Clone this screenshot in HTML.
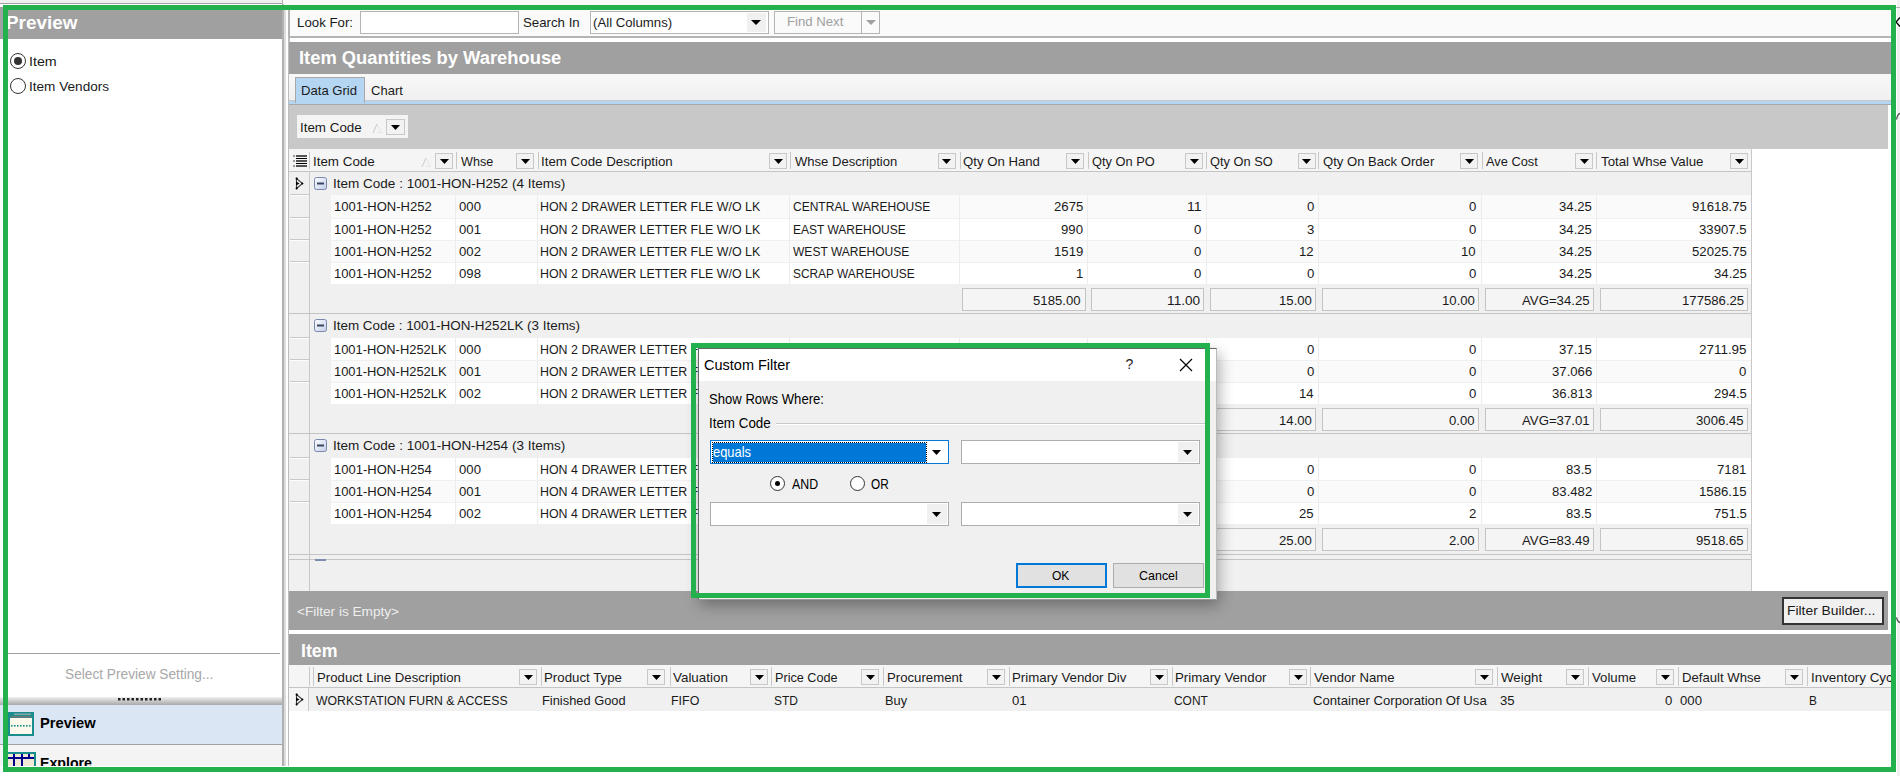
<!DOCTYPE html><html><head><meta charset="utf-8"><style>
html,body{margin:0;padding:0;width:1900px;height:776px;overflow:hidden;background:#fff}
body>div,body>svg{position:absolute}
.t{white-space:nowrap;font-family:"Liberation Sans",sans-serif;color:#1a1a1a;transform-origin:0 0}
div{font-family:"Liberation Sans",sans-serif}
</style></head><body>
<div style="left:0px;top:0px;width:283px;height:3px;background:#f0f0f0"></div>
<div style="left:0px;top:3px;width:283px;height:1px;background:#a0a0a0"></div>
<div style="left:282px;top:0px;width:2px;height:4px;background:#b0b0b0"></div>
<div style="left:283px;top:0px;width:1617px;height:10px;background:#fafafa"></div>
<div style="left:0px;top:7px;width:282px;height:32px;background:#a0a0a0"></div>
<div class="t" style="left:6.00px;top:13.77px;font-size:18px;line-height:18px;transform:scaleX(1.0478);font-weight:bold;color:#fff">Preview</div>
<div style="left:0px;top:39px;width:282px;height:658px;background:#fff"></div>
<div style="left:10px;top:53px;width:16px;height:16px;border:1px solid #333;border-radius:50%;box-sizing:border-box;background:#fff"></div>
<div style="left:14px;top:57px;width:8px;height:8px;border-radius:50%;background:#333"></div>
<div style="left:10px;top:78px;width:16px;height:16px;border:1px solid #333;border-radius:50%;box-sizing:border-box;background:#fff"></div>
<div class="t" style="left:29.00px;top:55.49px;font-size:13.6px;line-height:13.6px;transform:scaleX(1.0502);">Item</div>
<div class="t" style="left:29.00px;top:80.49px;font-size:13.6px;line-height:13.6px;">Item Vendors</div>
<div style="left:3px;top:653px;width:277px;height:1px;background:#a0a0a0"></div>
<div class="t" style="left:65.00px;top:667.16px;font-size:14px;line-height:14px;transform:scaleX(0.9779);color:#a8a8a8">Select Preview Setting...</div>
<div style="left:0px;top:697px;width:282px;height:8px;background:linear-gradient(#f0f0f0,#a8a8a8)"></div>
<svg style="left:118px;top:698px" width="45" height="3"><rect x="0.0" y="0" width="2.5" height="2.5" fill="#222"/><rect x="4.5" y="0" width="2.5" height="2.5" fill="#222"/><rect x="9.0" y="0" width="2.5" height="2.5" fill="#222"/><rect x="13.5" y="0" width="2.5" height="2.5" fill="#222"/><rect x="18.0" y="0" width="2.5" height="2.5" fill="#222"/><rect x="22.5" y="0" width="2.5" height="2.5" fill="#222"/><rect x="27.0" y="0" width="2.5" height="2.5" fill="#222"/><rect x="31.5" y="0" width="2.5" height="2.5" fill="#222"/><rect x="36.0" y="0" width="2.5" height="2.5" fill="#222"/><rect x="40.5" y="0" width="2.5" height="2.5" fill="#222"/></svg>
<div style="left:0px;top:705px;width:282px;height:39px;background:#dae6f3"></div>
<div style="left:0px;top:744px;width:282px;height:1px;background:#a0a0a0"></div>
<div style="left:0px;top:745px;width:282px;height:21px;background:#f4f4f4"></div>
<div class="t" style="left:40.30px;top:716.32px;font-size:14.4px;line-height:14.4px;transform:scaleX(1.0238);font-weight:bold;color:#000">Preview</div>
<div class="t" style="left:40.30px;top:755.82px;font-size:14.4px;line-height:14.4px;transform:scaleX(0.9849);font-weight:bold;color:#000">Explore</div>
<svg style="left:8px;top:712px" width="26" height="24"><rect x="1" y="1" width="24" height="22" fill="#fbf8ec" stroke="#1a8c8c" stroke-width="2"/><rect x="1" y="1" width="24" height="5" fill="#1a8c8c"/><rect x="6" y="1.5" width="17" height="1.5" fill="#8aa"/><rect x="3" y="4" width="20" height="1.5" fill="#777"/><rect x="3" y="13" width="1.6" height="1.6" fill="#1a8c8c"/><rect x="6" y="13" width="1.6" height="1.6" fill="#1a8c8c"/><rect x="9" y="13" width="1.6" height="1.6" fill="#1a8c8c"/><rect x="12" y="13" width="1.6" height="1.6" fill="#1a8c8c"/><rect x="15" y="13" width="1.6" height="1.6" fill="#1a8c8c"/><rect x="18" y="13" width="1.6" height="1.6" fill="#1a8c8c"/><rect x="21" y="13" width="1.6" height="1.6" fill="#1a8c8c"/></svg>
<svg style="left:8px;top:752px" width="28" height="14"><rect x="0" y="0" width="28" height="14" fill="#efe9d6"/><rect x="0" y="0" width="28" height="2" fill="#1a8c8c"/><rect x="26" y="0" width="2" height="14" fill="#1a8c8c"/><rect x="0" y="5" width="26" height="2" fill="#00008b"/><rect x="5" y="2" width="2" height="12" fill="#00008b"/><rect x="13" y="2" width="2" height="12" fill="#00008b"/><rect x="20" y="2" width="2" height="5" fill="#00008b"/></svg>
<div style="left:282px;top:4px;width:2px;height:762px;background:#b0b0b0"></div>
<div style="left:284px;top:10px;width:2px;height:756px;background:#dcdcdc"></div>
<div style="left:286px;top:10px;width:2px;height:756px;background:#fff"></div>
<div style="left:288px;top:38px;width:2px;height:728px;background:#bdbdbd"></div>
<div style="left:288px;top:10px;width:1612px;height:28px;background:#fafafa;border-left:2px solid #b4b4b4;border-bottom:2px solid #b4b4b4;box-sizing:border-box"></div>
<div class="t" style="left:297.00px;top:16.49px;font-size:13.6px;line-height:13.6px;transform:scaleX(0.9757);">Look For:</div>
<div style="left:360px;top:11px;width:159px;height:23px;background:#fff;border:1px solid #b4b4b4;box-sizing:border-box"></div>
<div class="t" style="left:523.00px;top:16.49px;font-size:13.6px;line-height:13.6px;transform:scaleX(0.9748);">Search In</div>
<div style="left:590px;top:11px;width:179px;height:23px;background:#fff;border:1px solid #b4b4b4;box-sizing:border-box"></div>
<div class="t" style="left:593.00px;top:16.49px;font-size:13.6px;line-height:13.6px;transform:scaleX(0.9709);">(All Columns)</div>
<div style="left:747px;top:13px;width:19px;height:19px;background:#f0f0f0"></div>
<div style="left:751px;top:20px;width:0;height:0;border-left:5px solid transparent;border-right:5px solid transparent;border-top:5px solid #000"></div>
<div style="left:774px;top:11px;width:106px;height:23px;background:#fafafa;border:1px solid #b4b4b4;box-sizing:border-box"></div>
<div style="left:861px;top:11px;width:1px;height:23px;background:#b4b4b4"></div>
<div class="t" style="left:787.00px;top:15.49px;font-size:13.6px;line-height:13.6px;transform:scaleX(0.9677);color:#a0a0a0">Find Next</div>
<div style="left:866px;top:20px;width:0;height:0;border-left:5px solid transparent;border-right:5px solid transparent;border-top:5px solid #a0a0a0"></div>
<div style="left:290px;top:38px;width:1606px;height:4px;background:#fff"></div>
<div style="left:289px;top:42px;width:1611px;height:32px;background:#a0a0a0"></div>
<div class="t" style="left:299.00px;top:48.77px;font-size:18px;line-height:18px;transform:scaleX(1.0191);font-weight:bold;color:#fff">Item Quantities by Warehouse</div>
<div style="left:289px;top:74px;width:1611px;height:28px;background:linear-gradient(#f8f8f8,#efefef)"></div>
<div style="left:289px;top:100px;width:1611px;height:1px;background:#c8c8c8"></div>
<div style="left:289px;top:101px;width:1611px;height:3px;background:#b5d6f2"></div>
<div style="left:289px;top:104px;width:1611px;height:1px;background:#a8a8a8"></div>
<div style="left:295px;top:77px;width:70px;height:26px;background:#b5d6f2;border:1px solid #a8a8a8;border-bottom:none;box-sizing:border-box"></div>
<div class="t" style="left:300.50px;top:83.79px;font-size:13.6px;line-height:13.6px;transform:scaleX(0.9636);">Data Grid</div>
<div class="t" style="left:370.60px;top:83.79px;font-size:13.6px;line-height:13.6px;transform:scaleX(0.9575);">Chart</div>
<div style="left:289px;top:105px;width:1600px;height:44px;background:#c8c8c8"></div>
<div style="left:297px;top:115px;width:111px;height:23px;background:#f4f4f4"></div>
<div class="t" style="left:300.00px;top:121.49px;font-size:13.6px;line-height:13.6px;transform:scaleX(0.9841);">Item Code</div>
<svg style="left:372px;top:123px" width="10" height="10"><path d="M1 10L5 1" stroke="#c8c8c8" stroke-width="1"/><path d="M5.5 2L9.5 9.5H5" fill="none" stroke="#e4e4e4" stroke-width="1"/></svg>
<div style="left:386px;top:119px;width:19px;height:16px;border:1px solid #c8c8c8;box-sizing:border-box;background:#f2f2f2"></div>
<svg style="left:391.0px;top:124.5px" width="9" height="5"><path d="M0 0H9L4.5 5Z" fill="#000"/></svg>
<div style="left:289px;top:149px;width:1462px;height:442px;background:#f0f0f0"></div>
<div style="left:1751px;top:149px;width:137px;height:442px;background:#fff"></div>
<div style="left:289px;top:149px;width:1463px;height:23px;background:#f5f5f5;border-bottom:1px solid #c4c4c4;box-sizing:border-box"></div>
<svg style="left:293px;top:155px" width="14" height="13"><g fill="#555"><rect x="3" y="0" width="11" height="2"/><rect x="3" y="5" width="11" height="2"/><rect x="3" y="10" width="11" height="2"/><rect x="0" y="0" width="2" height="2" fill="#999"/><rect x="0" y="5" width="2" height="2" fill="#999"/><rect x="0" y="10" width="2" height="2" fill="#999"/></g><g fill="#000"><rect x="3" y="3" width="11" height="1"/><rect x="3" y="8" width="11" height="1"/></g></svg>
<div style="left:309px;top:152px;width:1px;height:17px;background:#c8c8c8"></div>
<div class="t" style="left:312.70px;top:155.09px;font-size:13.6px;line-height:13.6px;transform:scaleX(0.9841);">Item Code</div>
<div style="left:435px;top:153px;width:18px;height:16px;border:1px solid #c8c8c8;box-sizing:border-box;background:#f2f2f2"></div>
<svg style="left:439.5px;top:158.5px" width="9" height="5"><path d="M0 0H9L4.5 5Z" fill="#000"/></svg>
<div style="left:456px;top:152px;width:1px;height:17px;background:#c8c8c8"></div>
<div class="t" style="left:460.50px;top:155.09px;font-size:13.6px;line-height:13.6px;transform:scaleX(0.9270);">Whse</div>
<div style="left:516px;top:153px;width:18px;height:16px;border:1px solid #c8c8c8;box-sizing:border-box;background:#f2f2f2"></div>
<svg style="left:520.5px;top:158.5px" width="9" height="5"><path d="M0 0H9L4.5 5Z" fill="#000"/></svg>
<div style="left:538px;top:152px;width:1px;height:17px;background:#c8c8c8"></div>
<div class="t" style="left:541.00px;top:155.09px;font-size:13.6px;line-height:13.6px;transform:scaleX(0.9799);">Item Code Description</div>
<div style="left:769px;top:153px;width:18px;height:16px;border:1px solid #c8c8c8;box-sizing:border-box;background:#f2f2f2"></div>
<svg style="left:773.5px;top:158.5px" width="9" height="5"><path d="M0 0H9L4.5 5Z" fill="#000"/></svg>
<div style="left:790px;top:152px;width:1px;height:17px;background:#c8c8c8"></div>
<div class="t" style="left:794.60px;top:155.09px;font-size:13.6px;line-height:13.6px;transform:scaleX(0.9600);">Whse Description</div>
<div style="left:937.5px;top:153px;width:18px;height:16px;border:1px solid #c8c8c8;box-sizing:border-box;background:#f2f2f2"></div>
<svg style="left:942.0px;top:158.5px" width="9" height="5"><path d="M0 0H9L4.5 5Z" fill="#000"/></svg>
<div style="left:960px;top:152px;width:1px;height:17px;background:#c8c8c8"></div>
<div class="t" style="left:963.00px;top:155.09px;font-size:13.6px;line-height:13.6px;transform:scaleX(0.9689);">Qty On Hand</div>
<div style="left:1066px;top:153px;width:18px;height:16px;border:1px solid #c8c8c8;box-sizing:border-box;background:#f2f2f2"></div>
<svg style="left:1070.5px;top:158.5px" width="9" height="5"><path d="M0 0H9L4.5 5Z" fill="#000"/></svg>
<div style="left:1088px;top:152px;width:1px;height:17px;background:#c8c8c8"></div>
<div class="t" style="left:1091.60px;top:155.09px;font-size:13.6px;line-height:13.6px;transform:scaleX(0.9437);">Qty On PO</div>
<div style="left:1185px;top:153px;width:18px;height:16px;border:1px solid #c8c8c8;box-sizing:border-box;background:#f2f2f2"></div>
<svg style="left:1189.5px;top:158.5px" width="9" height="5"><path d="M0 0H9L4.5 5Z" fill="#000"/></svg>
<div style="left:1206px;top:152px;width:1px;height:17px;background:#c8c8c8"></div>
<div class="t" style="left:1210.40px;top:155.09px;font-size:13.6px;line-height:13.6px;transform:scaleX(0.9425);">Qty On SO</div>
<div style="left:1297.5px;top:153px;width:18px;height:16px;border:1px solid #c8c8c8;box-sizing:border-box;background:#f2f2f2"></div>
<svg style="left:1302.0px;top:158.5px" width="9" height="5"><path d="M0 0H9L4.5 5Z" fill="#000"/></svg>
<div style="left:1318px;top:152px;width:1px;height:17px;background:#c8c8c8"></div>
<div class="t" style="left:1322.70px;top:155.09px;font-size:13.6px;line-height:13.6px;transform:scaleX(0.9624);">Qty On Back Order</div>
<div style="left:1460px;top:153px;width:18px;height:16px;border:1px solid #c8c8c8;box-sizing:border-box;background:#f2f2f2"></div>
<svg style="left:1464.5px;top:158.5px" width="9" height="5"><path d="M0 0H9L4.5 5Z" fill="#000"/></svg>
<div style="left:1482px;top:152px;width:1px;height:17px;background:#c8c8c8"></div>
<div class="t" style="left:1485.70px;top:155.09px;font-size:13.6px;line-height:13.6px;transform:scaleX(0.9420);">Ave Cost</div>
<div style="left:1575px;top:153px;width:18px;height:16px;border:1px solid #c8c8c8;box-sizing:border-box;background:#f2f2f2"></div>
<svg style="left:1579.5px;top:158.5px" width="9" height="5"><path d="M0 0H9L4.5 5Z" fill="#000"/></svg>
<div style="left:1596px;top:152px;width:1px;height:17px;background:#c8c8c8"></div>
<div class="t" style="left:1600.70px;top:155.09px;font-size:13.6px;line-height:13.6px;transform:scaleX(0.9777);">Total Whse Value</div>
<div style="left:1730px;top:153px;width:18px;height:16px;border:1px solid #c8c8c8;box-sizing:border-box;background:#f2f2f2"></div>
<svg style="left:1734.5px;top:158.5px" width="9" height="5"><path d="M0 0H9L4.5 5Z" fill="#000"/></svg>
<div style="left:1751px;top:149px;width:1px;height:442px;background:#c8c8c8"></div>
<svg style="left:421px;top:157px" width="10" height="10"><path d="M1 10L5 1" stroke="#c8c8c8" stroke-width="1"/><path d="M5.5 2L9.5 9.5H5" fill="none" stroke="#e4e4e4" stroke-width="1"/></svg>
<div style="left:309px;top:172px;width:1px;height:419px;background:#c8c8c8"></div>
<svg style="left:313px;top:177px" width="15" height="14"><defs><linearGradient id="eg0" x1="0" y1="0" x2="1" y2="1"><stop offset="0" stop-color="#fdfdff"/><stop offset="1" stop-color="#c3cfe8"/></linearGradient></defs><rect x="1.5" y="0.5" width="12" height="12" rx="2" fill="url(#eg0)" stroke="#7889ad" stroke-width="1"/><rect x="4" y="5.5" width="7" height="2" fill="#3a4660"/></svg>
<div class="t" style="left:333.00px;top:177.49px;font-size:13.6px;line-height:13.6px;transform:scaleX(0.9948);">Item Code : 1001-HON-H252 (4 Items)</div>
<div style="left:331px;top:195px;width:1420px;height:22.5px;background:#fafafa"></div>
<div style="left:290px;top:194px;width:19px;height:1px;background:#c8c8c8"></div>
<div style="left:290px;top:195px;width:19px;height:1px;background:#fcfcfc"></div>
<div style="left:455px;top:195px;width:1px;height:22.5px;background:#ececec"></div>
<div style="left:537px;top:195px;width:1px;height:22.5px;background:#ececec"></div>
<div style="left:789px;top:195px;width:1px;height:22.5px;background:#ececec"></div>
<div style="left:959px;top:195px;width:1px;height:22.5px;background:#ececec"></div>
<div style="left:1087px;top:195px;width:1px;height:22.5px;background:#ececec"></div>
<div style="left:1206px;top:195px;width:1px;height:22.5px;background:#ececec"></div>
<div style="left:1318px;top:195px;width:1px;height:22.5px;background:#ececec"></div>
<div style="left:1481px;top:195px;width:1px;height:22.5px;background:#ececec"></div>
<div style="left:1596px;top:195px;width:1px;height:22.5px;background:#ececec"></div>
<div class="t" style="left:334.20px;top:200.39px;font-size:13.6px;line-height:13.6px;transform:scaleX(0.9577);">1001-HON-H252</div>
<div class="t" style="left:459.30px;top:200.39px;font-size:13.6px;line-height:13.6px;transform:scaleX(0.9675);">000</div>
<div class="t" style="left:540.00px;top:200.39px;font-size:13.6px;line-height:13.6px;transform:scaleX(0.9132);">HON 2 DRAWER LETTER FLE W/O LK</div>
<div class="t" style="left:793.00px;top:200.39px;font-size:13.6px;line-height:13.6px;transform:scaleX(0.8837);">CENTRAL WAREHOUSE</div>
<div class="t" style="left:1053.73px;top:200.39px;font-size:13.6px;line-height:13.6px;transform:scaleX(0.9675);">2675</div>
<div class="t" style="left:1186.87px;top:200.39px;font-size:13.6px;line-height:13.6px;transform:scaleX(1.0360);">11</div>
<div class="t" style="left:1306.68px;top:200.39px;font-size:13.6px;line-height:13.6px;transform:scaleX(0.9675);">0</div>
<div class="t" style="left:1468.68px;top:200.39px;font-size:13.6px;line-height:13.6px;transform:scaleX(0.9675);">0</div>
<div class="t" style="left:1559.08px;top:200.39px;font-size:13.6px;line-height:13.6px;transform:scaleX(0.9675);">34.25</div>
<div class="t" style="left:1691.63px;top:200.39px;font-size:13.6px;line-height:13.6px;transform:scaleX(0.9677);">91618.75</div>
<div style="left:331px;top:217.5px;width:1420px;height:22.5px;background:#fff"></div>
<div style="left:290px;top:216.5px;width:19px;height:1px;background:#c8c8c8"></div>
<div style="left:290px;top:217.5px;width:19px;height:1px;background:#fcfcfc"></div>
<div style="left:455px;top:217.5px;width:1px;height:22.5px;background:#ececec"></div>
<div style="left:537px;top:217.5px;width:1px;height:22.5px;background:#ececec"></div>
<div style="left:789px;top:217.5px;width:1px;height:22.5px;background:#ececec"></div>
<div style="left:959px;top:217.5px;width:1px;height:22.5px;background:#ececec"></div>
<div style="left:1087px;top:217.5px;width:1px;height:22.5px;background:#ececec"></div>
<div style="left:1206px;top:217.5px;width:1px;height:22.5px;background:#ececec"></div>
<div style="left:1318px;top:217.5px;width:1px;height:22.5px;background:#ececec"></div>
<div style="left:1481px;top:217.5px;width:1px;height:22.5px;background:#ececec"></div>
<div style="left:1596px;top:217.5px;width:1px;height:22.5px;background:#ececec"></div>
<div style="left:331px;top:217.5px;width:1420px;height:1px;background:#f0f0f0"></div>
<div class="t" style="left:334.20px;top:222.89px;font-size:13.6px;line-height:13.6px;transform:scaleX(0.9577);">1001-HON-H252</div>
<div class="t" style="left:459.30px;top:222.89px;font-size:13.6px;line-height:13.6px;transform:scaleX(0.9675);">001</div>
<div class="t" style="left:540.00px;top:222.89px;font-size:13.6px;line-height:13.6px;transform:scaleX(0.9132);">HON 2 DRAWER LETTER FLE W/O LK</div>
<div class="t" style="left:793.00px;top:222.89px;font-size:13.6px;line-height:13.6px;transform:scaleX(0.8826);">EAST WAREHOUSE</div>
<div class="t" style="left:1061.05px;top:222.89px;font-size:13.6px;line-height:13.6px;transform:scaleX(0.9675);">990</div>
<div class="t" style="left:1194.18px;top:222.89px;font-size:13.6px;line-height:13.6px;transform:scaleX(0.9675);">0</div>
<div class="t" style="left:1306.68px;top:222.89px;font-size:13.6px;line-height:13.6px;transform:scaleX(0.9675);">3</div>
<div class="t" style="left:1468.68px;top:222.89px;font-size:13.6px;line-height:13.6px;transform:scaleX(0.9675);">0</div>
<div class="t" style="left:1559.08px;top:222.89px;font-size:13.6px;line-height:13.6px;transform:scaleX(0.9675);">34.25</div>
<div class="t" style="left:1698.94px;top:222.89px;font-size:13.6px;line-height:13.6px;transform:scaleX(0.9678);">33907.5</div>
<div style="left:331px;top:240px;width:1420px;height:22px;background:#fafafa"></div>
<div style="left:290px;top:239px;width:19px;height:1px;background:#c8c8c8"></div>
<div style="left:290px;top:240px;width:19px;height:1px;background:#fcfcfc"></div>
<div style="left:455px;top:240px;width:1px;height:22px;background:#ececec"></div>
<div style="left:537px;top:240px;width:1px;height:22px;background:#ececec"></div>
<div style="left:789px;top:240px;width:1px;height:22px;background:#ececec"></div>
<div style="left:959px;top:240px;width:1px;height:22px;background:#ececec"></div>
<div style="left:1087px;top:240px;width:1px;height:22px;background:#ececec"></div>
<div style="left:1206px;top:240px;width:1px;height:22px;background:#ececec"></div>
<div style="left:1318px;top:240px;width:1px;height:22px;background:#ececec"></div>
<div style="left:1481px;top:240px;width:1px;height:22px;background:#ececec"></div>
<div style="left:1596px;top:240px;width:1px;height:22px;background:#ececec"></div>
<div style="left:331px;top:240px;width:1420px;height:1px;background:#f0f0f0"></div>
<div class="t" style="left:334.20px;top:245.39px;font-size:13.6px;line-height:13.6px;transform:scaleX(0.9577);">1001-HON-H252</div>
<div class="t" style="left:459.30px;top:245.39px;font-size:13.6px;line-height:13.6px;transform:scaleX(0.9675);">002</div>
<div class="t" style="left:540.00px;top:245.39px;font-size:13.6px;line-height:13.6px;transform:scaleX(0.9132);">HON 2 DRAWER LETTER FLE W/O LK</div>
<div class="t" style="left:793.00px;top:245.39px;font-size:13.6px;line-height:13.6px;transform:scaleX(0.8851);">WEST WAREHOUSE</div>
<div class="t" style="left:1053.73px;top:245.39px;font-size:13.6px;line-height:13.6px;transform:scaleX(0.9675);">1519</div>
<div class="t" style="left:1194.18px;top:245.39px;font-size:13.6px;line-height:13.6px;transform:scaleX(0.9675);">0</div>
<div class="t" style="left:1299.37px;top:245.39px;font-size:13.6px;line-height:13.6px;transform:scaleX(0.9675);">12</div>
<div class="t" style="left:1461.37px;top:245.39px;font-size:13.6px;line-height:13.6px;transform:scaleX(0.9675);">10</div>
<div class="t" style="left:1559.08px;top:245.39px;font-size:13.6px;line-height:13.6px;transform:scaleX(0.9675);">34.25</div>
<div class="t" style="left:1691.63px;top:245.39px;font-size:13.6px;line-height:13.6px;transform:scaleX(0.9677);">52025.75</div>
<div style="left:331px;top:262px;width:1420px;height:22px;background:#fff"></div>
<div style="left:290px;top:261px;width:19px;height:1px;background:#c8c8c8"></div>
<div style="left:290px;top:262px;width:19px;height:1px;background:#fcfcfc"></div>
<div style="left:455px;top:262px;width:1px;height:22px;background:#ececec"></div>
<div style="left:537px;top:262px;width:1px;height:22px;background:#ececec"></div>
<div style="left:789px;top:262px;width:1px;height:22px;background:#ececec"></div>
<div style="left:959px;top:262px;width:1px;height:22px;background:#ececec"></div>
<div style="left:1087px;top:262px;width:1px;height:22px;background:#ececec"></div>
<div style="left:1206px;top:262px;width:1px;height:22px;background:#ececec"></div>
<div style="left:1318px;top:262px;width:1px;height:22px;background:#ececec"></div>
<div style="left:1481px;top:262px;width:1px;height:22px;background:#ececec"></div>
<div style="left:1596px;top:262px;width:1px;height:22px;background:#ececec"></div>
<div style="left:331px;top:262px;width:1420px;height:1px;background:#f0f0f0"></div>
<div class="t" style="left:334.20px;top:267.39px;font-size:13.6px;line-height:13.6px;transform:scaleX(0.9577);">1001-HON-H252</div>
<div class="t" style="left:459.30px;top:267.39px;font-size:13.6px;line-height:13.6px;transform:scaleX(0.9675);">098</div>
<div class="t" style="left:540.00px;top:267.39px;font-size:13.6px;line-height:13.6px;transform:scaleX(0.9132);">HON 2 DRAWER LETTER FLE W/O LK</div>
<div class="t" style="left:793.00px;top:267.39px;font-size:13.6px;line-height:13.6px;transform:scaleX(0.8752);">SCRAP WAREHOUSE</div>
<div class="t" style="left:1075.68px;top:267.39px;font-size:13.6px;line-height:13.6px;transform:scaleX(0.9675);">1</div>
<div class="t" style="left:1194.18px;top:267.39px;font-size:13.6px;line-height:13.6px;transform:scaleX(0.9675);">0</div>
<div class="t" style="left:1306.68px;top:267.39px;font-size:13.6px;line-height:13.6px;transform:scaleX(0.9675);">0</div>
<div class="t" style="left:1468.68px;top:267.39px;font-size:13.6px;line-height:13.6px;transform:scaleX(0.9675);">0</div>
<div class="t" style="left:1559.08px;top:267.39px;font-size:13.6px;line-height:13.6px;transform:scaleX(0.9675);">34.25</div>
<div class="t" style="left:1713.58px;top:267.39px;font-size:13.6px;line-height:13.6px;transform:scaleX(0.9675);">34.25</div>
<div style="left:962px;top:288px;width:124px;height:23px;background:#f5f5f5;border:1px solid #c4c4c4;box-sizing:border-box"></div>
<div class="t" style="left:1033.44px;top:293.69px;font-size:13.6px;line-height:13.6px;transform:scaleX(0.9678);">5185.00</div>
<div style="left:1091px;top:288px;width:113px;height:23px;background:#f5f5f5;border:1px solid #c4c4c4;box-sizing:border-box"></div>
<div class="t" style="left:1167.08px;top:293.69px;font-size:13.6px;line-height:13.6px;">11.00</div>
<div style="left:1210px;top:288px;width:106px;height:23px;background:#f5f5f5;border:1px solid #c4c4c4;box-sizing:border-box"></div>
<div class="t" style="left:1279.08px;top:293.69px;font-size:13.6px;line-height:13.6px;transform:scaleX(0.9675);">15.00</div>
<div style="left:1322px;top:288px;width:157px;height:23px;background:#f5f5f5;border:1px solid #c4c4c4;box-sizing:border-box"></div>
<div class="t" style="left:1442.08px;top:293.69px;font-size:13.6px;line-height:13.6px;transform:scaleX(0.9675);">10.00</div>
<div style="left:1485px;top:288px;width:109px;height:23px;background:#f5f5f5;border:1px solid #c4c4c4;box-sizing:border-box"></div>
<div class="t" style="left:1522.37px;top:293.69px;font-size:13.6px;line-height:13.6px;transform:scaleX(0.9709);">AVG=34.25</div>
<div style="left:1600px;top:288px;width:148px;height:23px;background:#f5f5f5;border:1px solid #c4c4c4;box-sizing:border-box"></div>
<div class="t" style="left:1681.81px;top:293.69px;font-size:13.6px;line-height:13.6px;transform:scaleX(0.9677);">177586.25</div>
<svg style="left:313px;top:319px" width="15" height="14"><defs><linearGradient id="eg1" x1="0" y1="0" x2="1" y2="1"><stop offset="0" stop-color="#fdfdff"/><stop offset="1" stop-color="#c3cfe8"/></linearGradient></defs><rect x="1.5" y="0.5" width="12" height="12" rx="2" fill="url(#eg1)" stroke="#7889ad" stroke-width="1"/><rect x="4" y="5.5" width="7" height="2" fill="#3a4660"/></svg>
<div class="t" style="left:333.00px;top:319.49px;font-size:13.6px;line-height:13.6px;transform:scaleX(0.9879);">Item Code : 1001-HON-H252LK (3 Items)</div>
<div style="left:331px;top:338px;width:1420px;height:22px;background:#fff"></div>
<div style="left:290px;top:337px;width:19px;height:1px;background:#c8c8c8"></div>
<div style="left:290px;top:338px;width:19px;height:1px;background:#fcfcfc"></div>
<div style="left:455px;top:338px;width:1px;height:22px;background:#ececec"></div>
<div style="left:537px;top:338px;width:1px;height:22px;background:#ececec"></div>
<div style="left:789px;top:338px;width:1px;height:22px;background:#ececec"></div>
<div style="left:959px;top:338px;width:1px;height:22px;background:#ececec"></div>
<div style="left:1087px;top:338px;width:1px;height:22px;background:#ececec"></div>
<div style="left:1206px;top:338px;width:1px;height:22px;background:#ececec"></div>
<div style="left:1318px;top:338px;width:1px;height:22px;background:#ececec"></div>
<div style="left:1481px;top:338px;width:1px;height:22px;background:#ececec"></div>
<div style="left:1596px;top:338px;width:1px;height:22px;background:#ececec"></div>
<div class="t" style="left:334.20px;top:343.39px;font-size:13.6px;line-height:13.6px;transform:scaleX(0.9482);">1001-HON-H252LK</div>
<div class="t" style="left:459.30px;top:343.39px;font-size:13.6px;line-height:13.6px;transform:scaleX(0.9675);">000</div>
<div class="t" style="left:540.00px;top:343.39px;font-size:13.6px;line-height:13.6px;transform:scaleX(0.9132);">HON 2 DRAWER LETTER FLE W/O LK</div>
<div class="t" style="left:793.00px;top:343.39px;font-size:13.6px;line-height:13.6px;transform:scaleX(0.8837);">CENTRAL WAREHOUSE</div>
<div class="t" style="left:1068.37px;top:343.39px;font-size:13.6px;line-height:13.6px;transform:scaleX(0.9675);">73</div>
<div class="t" style="left:1194.18px;top:343.39px;font-size:13.6px;line-height:13.6px;transform:scaleX(0.9675);">0</div>
<div class="t" style="left:1306.68px;top:343.39px;font-size:13.6px;line-height:13.6px;transform:scaleX(0.9675);">0</div>
<div class="t" style="left:1468.68px;top:343.39px;font-size:13.6px;line-height:13.6px;transform:scaleX(0.9675);">0</div>
<div class="t" style="left:1559.08px;top:343.39px;font-size:13.6px;line-height:13.6px;transform:scaleX(0.9675);">37.15</div>
<div class="t" style="left:1698.94px;top:343.39px;font-size:13.6px;line-height:13.6px;transform:scaleX(0.9879);">2711.95</div>
<div style="left:331px;top:360px;width:1420px;height:22px;background:#fafafa"></div>
<div style="left:290px;top:359px;width:19px;height:1px;background:#c8c8c8"></div>
<div style="left:290px;top:360px;width:19px;height:1px;background:#fcfcfc"></div>
<div style="left:455px;top:360px;width:1px;height:22px;background:#ececec"></div>
<div style="left:537px;top:360px;width:1px;height:22px;background:#ececec"></div>
<div style="left:789px;top:360px;width:1px;height:22px;background:#ececec"></div>
<div style="left:959px;top:360px;width:1px;height:22px;background:#ececec"></div>
<div style="left:1087px;top:360px;width:1px;height:22px;background:#ececec"></div>
<div style="left:1206px;top:360px;width:1px;height:22px;background:#ececec"></div>
<div style="left:1318px;top:360px;width:1px;height:22px;background:#ececec"></div>
<div style="left:1481px;top:360px;width:1px;height:22px;background:#ececec"></div>
<div style="left:1596px;top:360px;width:1px;height:22px;background:#ececec"></div>
<div style="left:331px;top:360px;width:1420px;height:1px;background:#f0f0f0"></div>
<div class="t" style="left:334.20px;top:365.39px;font-size:13.6px;line-height:13.6px;transform:scaleX(0.9482);">1001-HON-H252LK</div>
<div class="t" style="left:459.30px;top:365.39px;font-size:13.6px;line-height:13.6px;transform:scaleX(0.9675);">001</div>
<div class="t" style="left:540.00px;top:365.39px;font-size:13.6px;line-height:13.6px;transform:scaleX(0.9132);">HON 2 DRAWER LETTER FLE W/O LK</div>
<div class="t" style="left:793.00px;top:365.39px;font-size:13.6px;line-height:13.6px;transform:scaleX(0.8826);">EAST WAREHOUSE</div>
<div class="t" style="left:1075.68px;top:365.39px;font-size:13.6px;line-height:13.6px;transform:scaleX(0.9675);">0</div>
<div class="t" style="left:1194.18px;top:365.39px;font-size:13.6px;line-height:13.6px;transform:scaleX(0.9675);">0</div>
<div class="t" style="left:1306.68px;top:365.39px;font-size:13.6px;line-height:13.6px;transform:scaleX(0.9675);">0</div>
<div class="t" style="left:1468.68px;top:365.39px;font-size:13.6px;line-height:13.6px;transform:scaleX(0.9675);">0</div>
<div class="t" style="left:1551.76px;top:365.39px;font-size:13.6px;line-height:13.6px;transform:scaleX(0.9678);">37.066</div>
<div class="t" style="left:1739.18px;top:365.39px;font-size:13.6px;line-height:13.6px;transform:scaleX(0.9675);">0</div>
<div style="left:331px;top:382px;width:1420px;height:22px;background:#fff"></div>
<div style="left:290px;top:381px;width:19px;height:1px;background:#c8c8c8"></div>
<div style="left:290px;top:382px;width:19px;height:1px;background:#fcfcfc"></div>
<div style="left:455px;top:382px;width:1px;height:22px;background:#ececec"></div>
<div style="left:537px;top:382px;width:1px;height:22px;background:#ececec"></div>
<div style="left:789px;top:382px;width:1px;height:22px;background:#ececec"></div>
<div style="left:959px;top:382px;width:1px;height:22px;background:#ececec"></div>
<div style="left:1087px;top:382px;width:1px;height:22px;background:#ececec"></div>
<div style="left:1206px;top:382px;width:1px;height:22px;background:#ececec"></div>
<div style="left:1318px;top:382px;width:1px;height:22px;background:#ececec"></div>
<div style="left:1481px;top:382px;width:1px;height:22px;background:#ececec"></div>
<div style="left:1596px;top:382px;width:1px;height:22px;background:#ececec"></div>
<div style="left:331px;top:382px;width:1420px;height:1px;background:#f0f0f0"></div>
<div class="t" style="left:334.20px;top:387.39px;font-size:13.6px;line-height:13.6px;transform:scaleX(0.9482);">1001-HON-H252LK</div>
<div class="t" style="left:459.30px;top:387.39px;font-size:13.6px;line-height:13.6px;transform:scaleX(0.9675);">002</div>
<div class="t" style="left:540.00px;top:387.39px;font-size:13.6px;line-height:13.6px;transform:scaleX(0.9132);">HON 2 DRAWER LETTER FLE W/O LK</div>
<div class="t" style="left:793.00px;top:387.39px;font-size:13.6px;line-height:13.6px;transform:scaleX(0.8851);">WEST WAREHOUSE</div>
<div class="t" style="left:1075.68px;top:387.39px;font-size:13.6px;line-height:13.6px;transform:scaleX(0.9675);">8</div>
<div class="t" style="left:1194.18px;top:387.39px;font-size:13.6px;line-height:13.6px;transform:scaleX(0.9675);">0</div>
<div class="t" style="left:1299.37px;top:387.39px;font-size:13.6px;line-height:13.6px;transform:scaleX(0.9675);">14</div>
<div class="t" style="left:1468.68px;top:387.39px;font-size:13.6px;line-height:13.6px;transform:scaleX(0.9675);">0</div>
<div class="t" style="left:1551.76px;top:387.39px;font-size:13.6px;line-height:13.6px;transform:scaleX(0.9678);">36.813</div>
<div class="t" style="left:1713.58px;top:387.39px;font-size:13.6px;line-height:13.6px;transform:scaleX(0.9675);">294.5</div>
<div style="left:962px;top:408px;width:124px;height:23px;background:#f5f5f5;border:1px solid #c4c4c4;box-sizing:border-box"></div>
<div class="t" style="left:1048.08px;top:413.69px;font-size:13.6px;line-height:13.6px;transform:scaleX(0.9675);">81.00</div>
<div style="left:1091px;top:408px;width:113px;height:23px;background:#f5f5f5;border:1px solid #c4c4c4;box-sizing:border-box"></div>
<div class="t" style="left:1174.39px;top:413.69px;font-size:13.6px;line-height:13.6px;transform:scaleX(0.9675);">0.00</div>
<div style="left:1210px;top:408px;width:106px;height:23px;background:#f5f5f5;border:1px solid #c4c4c4;box-sizing:border-box"></div>
<div class="t" style="left:1279.08px;top:413.69px;font-size:13.6px;line-height:13.6px;transform:scaleX(0.9675);">14.00</div>
<div style="left:1322px;top:408px;width:157px;height:23px;background:#f5f5f5;border:1px solid #c4c4c4;box-sizing:border-box"></div>
<div class="t" style="left:1449.39px;top:413.69px;font-size:13.6px;line-height:13.6px;transform:scaleX(0.9675);">0.00</div>
<div style="left:1485px;top:408px;width:109px;height:23px;background:#f5f5f5;border:1px solid #c4c4c4;box-sizing:border-box"></div>
<div class="t" style="left:1522.37px;top:413.69px;font-size:13.6px;line-height:13.6px;transform:scaleX(0.9709);">AVG=37.01</div>
<div style="left:1600px;top:408px;width:148px;height:23px;background:#f5f5f5;border:1px solid #c4c4c4;box-sizing:border-box"></div>
<div class="t" style="left:1696.44px;top:413.69px;font-size:13.6px;line-height:13.6px;transform:scaleX(0.9678);">3006.45</div>
<svg style="left:313px;top:439px" width="15" height="14"><defs><linearGradient id="eg2" x1="0" y1="0" x2="1" y2="1"><stop offset="0" stop-color="#fdfdff"/><stop offset="1" stop-color="#c3cfe8"/></linearGradient></defs><rect x="1.5" y="0.5" width="12" height="12" rx="2" fill="url(#eg2)" stroke="#7889ad" stroke-width="1"/><rect x="4" y="5.5" width="7" height="2" fill="#3a4660"/></svg>
<div class="t" style="left:333.00px;top:439.49px;font-size:13.6px;line-height:13.6px;transform:scaleX(0.9948);">Item Code : 1001-HON-H254 (3 Items)</div>
<div style="left:331px;top:458px;width:1420px;height:21.5px;background:#fff"></div>
<div style="left:290px;top:457px;width:19px;height:1px;background:#c8c8c8"></div>
<div style="left:290px;top:458px;width:19px;height:1px;background:#fcfcfc"></div>
<div style="left:455px;top:458px;width:1px;height:21.5px;background:#ececec"></div>
<div style="left:537px;top:458px;width:1px;height:21.5px;background:#ececec"></div>
<div style="left:789px;top:458px;width:1px;height:21.5px;background:#ececec"></div>
<div style="left:959px;top:458px;width:1px;height:21.5px;background:#ececec"></div>
<div style="left:1087px;top:458px;width:1px;height:21.5px;background:#ececec"></div>
<div style="left:1206px;top:458px;width:1px;height:21.5px;background:#ececec"></div>
<div style="left:1318px;top:458px;width:1px;height:21.5px;background:#ececec"></div>
<div style="left:1481px;top:458px;width:1px;height:21.5px;background:#ececec"></div>
<div style="left:1596px;top:458px;width:1px;height:21.5px;background:#ececec"></div>
<div class="t" style="left:334.20px;top:463.39px;font-size:13.6px;line-height:13.6px;transform:scaleX(0.9577);">1001-HON-H254</div>
<div class="t" style="left:459.30px;top:463.39px;font-size:13.6px;line-height:13.6px;transform:scaleX(0.9675);">000</div>
<div class="t" style="left:540.00px;top:463.39px;font-size:13.6px;line-height:13.6px;transform:scaleX(0.9132);">HON 4 DRAWER LETTER FLE W/O LK</div>
<div class="t" style="left:793.00px;top:463.39px;font-size:13.6px;line-height:13.6px;transform:scaleX(0.8837);">CENTRAL WAREHOUSE</div>
<div class="t" style="left:1068.37px;top:463.39px;font-size:13.6px;line-height:13.6px;transform:scaleX(0.9675);">86</div>
<div class="t" style="left:1194.18px;top:463.39px;font-size:13.6px;line-height:13.6px;transform:scaleX(0.9675);">0</div>
<div class="t" style="left:1306.68px;top:463.39px;font-size:13.6px;line-height:13.6px;transform:scaleX(0.9675);">0</div>
<div class="t" style="left:1468.68px;top:463.39px;font-size:13.6px;line-height:13.6px;transform:scaleX(0.9675);">0</div>
<div class="t" style="left:1566.39px;top:463.39px;font-size:13.6px;line-height:13.6px;transform:scaleX(0.9675);">83.5</div>
<div class="t" style="left:1717.23px;top:463.39px;font-size:13.6px;line-height:13.6px;transform:scaleX(0.9675);">7181</div>
<div style="left:331px;top:479.5px;width:1420px;height:22.5px;background:#fafafa"></div>
<div style="left:290px;top:478.5px;width:19px;height:1px;background:#c8c8c8"></div>
<div style="left:290px;top:479.5px;width:19px;height:1px;background:#fcfcfc"></div>
<div style="left:455px;top:479.5px;width:1px;height:22.5px;background:#ececec"></div>
<div style="left:537px;top:479.5px;width:1px;height:22.5px;background:#ececec"></div>
<div style="left:789px;top:479.5px;width:1px;height:22.5px;background:#ececec"></div>
<div style="left:959px;top:479.5px;width:1px;height:22.5px;background:#ececec"></div>
<div style="left:1087px;top:479.5px;width:1px;height:22.5px;background:#ececec"></div>
<div style="left:1206px;top:479.5px;width:1px;height:22.5px;background:#ececec"></div>
<div style="left:1318px;top:479.5px;width:1px;height:22.5px;background:#ececec"></div>
<div style="left:1481px;top:479.5px;width:1px;height:22.5px;background:#ececec"></div>
<div style="left:1596px;top:479.5px;width:1px;height:22.5px;background:#ececec"></div>
<div style="left:331px;top:479.5px;width:1420px;height:1px;background:#f0f0f0"></div>
<div class="t" style="left:334.20px;top:484.89px;font-size:13.6px;line-height:13.6px;transform:scaleX(0.9577);">1001-HON-H254</div>
<div class="t" style="left:459.30px;top:484.89px;font-size:13.6px;line-height:13.6px;transform:scaleX(0.9675);">001</div>
<div class="t" style="left:540.00px;top:484.89px;font-size:13.6px;line-height:13.6px;transform:scaleX(0.9132);">HON 4 DRAWER LETTER FLE W/O LK</div>
<div class="t" style="left:793.00px;top:484.89px;font-size:13.6px;line-height:13.6px;transform:scaleX(0.8826);">EAST WAREHOUSE</div>
<div class="t" style="left:1068.37px;top:484.89px;font-size:13.6px;line-height:13.6px;transform:scaleX(0.9675);">19</div>
<div class="t" style="left:1194.18px;top:484.89px;font-size:13.6px;line-height:13.6px;transform:scaleX(0.9675);">0</div>
<div class="t" style="left:1306.68px;top:484.89px;font-size:13.6px;line-height:13.6px;transform:scaleX(0.9675);">0</div>
<div class="t" style="left:1468.68px;top:484.89px;font-size:13.6px;line-height:13.6px;transform:scaleX(0.9675);">0</div>
<div class="t" style="left:1551.76px;top:484.89px;font-size:13.6px;line-height:13.6px;transform:scaleX(0.9678);">83.482</div>
<div class="t" style="left:1698.94px;top:484.89px;font-size:13.6px;line-height:13.6px;transform:scaleX(0.9678);">1586.15</div>
<div style="left:331px;top:502px;width:1420px;height:22px;background:#fff"></div>
<div style="left:290px;top:501px;width:19px;height:1px;background:#c8c8c8"></div>
<div style="left:290px;top:502px;width:19px;height:1px;background:#fcfcfc"></div>
<div style="left:455px;top:502px;width:1px;height:22px;background:#ececec"></div>
<div style="left:537px;top:502px;width:1px;height:22px;background:#ececec"></div>
<div style="left:789px;top:502px;width:1px;height:22px;background:#ececec"></div>
<div style="left:959px;top:502px;width:1px;height:22px;background:#ececec"></div>
<div style="left:1087px;top:502px;width:1px;height:22px;background:#ececec"></div>
<div style="left:1206px;top:502px;width:1px;height:22px;background:#ececec"></div>
<div style="left:1318px;top:502px;width:1px;height:22px;background:#ececec"></div>
<div style="left:1481px;top:502px;width:1px;height:22px;background:#ececec"></div>
<div style="left:1596px;top:502px;width:1px;height:22px;background:#ececec"></div>
<div style="left:331px;top:502px;width:1420px;height:1px;background:#f0f0f0"></div>
<div class="t" style="left:334.20px;top:507.39px;font-size:13.6px;line-height:13.6px;transform:scaleX(0.9577);">1001-HON-H254</div>
<div class="t" style="left:459.30px;top:507.39px;font-size:13.6px;line-height:13.6px;transform:scaleX(0.9675);">002</div>
<div class="t" style="left:540.00px;top:507.39px;font-size:13.6px;line-height:13.6px;transform:scaleX(0.9132);">HON 4 DRAWER LETTER FLE W/O LK</div>
<div class="t" style="left:793.00px;top:507.39px;font-size:13.6px;line-height:13.6px;transform:scaleX(0.8851);">WEST WAREHOUSE</div>
<div class="t" style="left:1075.68px;top:507.39px;font-size:13.6px;line-height:13.6px;transform:scaleX(0.9675);">9</div>
<div class="t" style="left:1194.18px;top:507.39px;font-size:13.6px;line-height:13.6px;transform:scaleX(0.9675);">0</div>
<div class="t" style="left:1299.37px;top:507.39px;font-size:13.6px;line-height:13.6px;transform:scaleX(0.9675);">25</div>
<div class="t" style="left:1468.68px;top:507.39px;font-size:13.6px;line-height:13.6px;transform:scaleX(0.9675);">2</div>
<div class="t" style="left:1566.39px;top:507.39px;font-size:13.6px;line-height:13.6px;transform:scaleX(0.9675);">83.5</div>
<div class="t" style="left:1713.58px;top:507.39px;font-size:13.6px;line-height:13.6px;transform:scaleX(0.9675);">751.5</div>
<div style="left:962px;top:528px;width:124px;height:23px;background:#f5f5f5;border:1px solid #c4c4c4;box-sizing:border-box"></div>
<div class="t" style="left:1040.76px;top:533.69px;font-size:13.6px;line-height:13.6px;transform:scaleX(0.9917);">114.00</div>
<div style="left:1091px;top:528px;width:113px;height:23px;background:#f5f5f5;border:1px solid #c4c4c4;box-sizing:border-box"></div>
<div class="t" style="left:1174.39px;top:533.69px;font-size:13.6px;line-height:13.6px;transform:scaleX(0.9675);">0.00</div>
<div style="left:1210px;top:528px;width:106px;height:23px;background:#f5f5f5;border:1px solid #c4c4c4;box-sizing:border-box"></div>
<div class="t" style="left:1279.08px;top:533.69px;font-size:13.6px;line-height:13.6px;transform:scaleX(0.9675);">25.00</div>
<div style="left:1322px;top:528px;width:157px;height:23px;background:#f5f5f5;border:1px solid #c4c4c4;box-sizing:border-box"></div>
<div class="t" style="left:1449.39px;top:533.69px;font-size:13.6px;line-height:13.6px;transform:scaleX(0.9675);">2.00</div>
<div style="left:1485px;top:528px;width:109px;height:23px;background:#f5f5f5;border:1px solid #c4c4c4;box-sizing:border-box"></div>
<div class="t" style="left:1522.37px;top:533.69px;font-size:13.6px;line-height:13.6px;transform:scaleX(0.9709);">AVG=83.49</div>
<div style="left:1600px;top:528px;width:148px;height:23px;background:#f5f5f5;border:1px solid #c4c4c4;box-sizing:border-box"></div>
<div class="t" style="left:1696.44px;top:533.69px;font-size:13.6px;line-height:13.6px;transform:scaleX(0.9678);">9518.65</div>
<div style="left:289px;top:313px;width:1462px;height:1px;background:#c4c4c4"></div>
<div style="left:289px;top:433px;width:1462px;height:1px;background:#c4c4c4"></div>
<div style="left:289px;top:554px;width:1462px;height:1px;background:#c4c4c4"></div>
<div style="left:289px;top:559px;width:1462px;height:1px;background:#c4c4c4"></div>
<div style="left:315px;top:559px;width:11px;height:1.5px;background:#7a8cb0"></div>
<svg style="left:295px;top:177px" width="9" height="13"><path d="M1.5 1.5L7.5 6.5L1.5 11.5Z" fill="none" stroke="#444" stroke-width="1.1"/><path d="M1 4.5L4.5 6.5L1 8.5Z" fill="#000"/><circle cx="1.7" cy="1.7" r="1.1" fill="#000"/><circle cx="1.7" cy="11.3" r="1.1" fill="#000"/><circle cx="7.3" cy="6.5" r="1.1" fill="#000"/></svg>
<div style="left:289px;top:591px;width:1600px;height:39px;background:#a0a0a0"></div>
<div class="t" style="left:297.00px;top:605.49px;font-size:13.6px;line-height:13.6px;color:#eee">&lt;Filter is Empty&gt;</div>
<div style="left:1782px;top:597px;width:102px;height:28px;background:#f0f0f0;border:2px solid #333;box-sizing:border-box"></div>
<div class="t" style="left:1787.40px;top:604.49px;font-size:13.6px;line-height:13.6px;transform:scaleX(1.0174);">Filter Builder...</div>
<div style="left:289px;top:630px;width:1611px;height:4px;background:#fff"></div>
<div style="left:289px;top:634px;width:1611px;height:31px;background:#a0a0a0"></div>
<div class="t" style="left:300.50px;top:641.97px;font-size:18px;line-height:18px;transform:scaleX(0.9861);font-weight:bold;color:#fff">Item</div>
<div style="left:289px;top:665px;width:1611px;height:23px;background:#f5f5f5;border-bottom:1px solid #c4c4c4;box-sizing:border-box"></div>
<div style="left:309px;top:667px;width:1px;height:19px;background:#c8c8c8"></div>
<div style="left:313px;top:667px;width:1px;height:19px;background:#c8c8c8"></div>
<div class="t" style="left:317.40px;top:671.49px;font-size:13.6px;line-height:13.6px;transform:scaleX(0.9712);">Product Line Description</div>
<div style="left:519px;top:669px;width:18px;height:16px;border:1px solid #c8c8c8;box-sizing:border-box;background:#f2f2f2"></div>
<svg style="left:523.5px;top:674.5px" width="9" height="5"><path d="M0 0H9L4.5 5Z" fill="#000"/></svg>
<div style="left:541px;top:667px;width:1px;height:19px;background:#c8c8c8"></div>
<div class="t" style="left:543.80px;top:671.49px;font-size:13.6px;line-height:13.6px;transform:scaleX(0.9764);">Product Type</div>
<div style="left:647px;top:669px;width:18px;height:16px;border:1px solid #c8c8c8;box-sizing:border-box;background:#f2f2f2"></div>
<svg style="left:651.5px;top:674.5px" width="9" height="5"><path d="M0 0H9L4.5 5Z" fill="#000"/></svg>
<div style="left:670px;top:667px;width:1px;height:19px;background:#c8c8c8"></div>
<div class="t" style="left:673.00px;top:671.49px;font-size:13.6px;line-height:13.6px;transform:scaleX(0.9849);">Valuation</div>
<div style="left:750px;top:669px;width:18px;height:16px;border:1px solid #c8c8c8;box-sizing:border-box;background:#f2f2f2"></div>
<svg style="left:754.5px;top:674.5px" width="9" height="5"><path d="M0 0H9L4.5 5Z" fill="#000"/></svg>
<div style="left:771px;top:667px;width:1px;height:19px;background:#c8c8c8"></div>
<div class="t" style="left:775.00px;top:671.49px;font-size:13.6px;line-height:13.6px;transform:scaleX(0.9317);">Price Code</div>
<div style="left:861.3px;top:669px;width:18px;height:16px;border:1px solid #c8c8c8;box-sizing:border-box;background:#f2f2f2"></div>
<svg style="left:865.8px;top:674.5px" width="9" height="5"><path d="M0 0H9L4.5 5Z" fill="#000"/></svg>
<div style="left:883px;top:667px;width:1px;height:19px;background:#c8c8c8"></div>
<div class="t" style="left:886.50px;top:671.49px;font-size:13.6px;line-height:13.6px;transform:scaleX(0.9697);">Procurement</div>
<div style="left:987px;top:669px;width:18px;height:16px;border:1px solid #c8c8c8;box-sizing:border-box;background:#f2f2f2"></div>
<svg style="left:991.5px;top:674.5px" width="9" height="5"><path d="M0 0H9L4.5 5Z" fill="#000"/></svg>
<div style="left:1009px;top:667px;width:1px;height:19px;background:#c8c8c8"></div>
<div class="t" style="left:1012.30px;top:671.49px;font-size:13.6px;line-height:13.6px;transform:scaleX(0.9772);">Primary Vendor Div</div>
<div style="left:1150px;top:669px;width:18px;height:16px;border:1px solid #c8c8c8;box-sizing:border-box;background:#f2f2f2"></div>
<svg style="left:1154.5px;top:674.5px" width="9" height="5"><path d="M0 0H9L4.5 5Z" fill="#000"/></svg>
<div style="left:1172px;top:667px;width:1px;height:19px;background:#c8c8c8"></div>
<div class="t" style="left:1175.40px;top:671.49px;font-size:13.6px;line-height:13.6px;transform:scaleX(0.9759);">Primary Vendor</div>
<div style="left:1289px;top:669px;width:18px;height:16px;border:1px solid #c8c8c8;box-sizing:border-box;background:#f2f2f2"></div>
<svg style="left:1293.5px;top:674.5px" width="9" height="5"><path d="M0 0H9L4.5 5Z" fill="#000"/></svg>
<div style="left:1310px;top:667px;width:1px;height:19px;background:#c8c8c8"></div>
<div class="t" style="left:1313.70px;top:671.49px;font-size:13.6px;line-height:13.6px;transform:scaleX(0.9685);">Vendor Name</div>
<div style="left:1475px;top:669px;width:18px;height:16px;border:1px solid #c8c8c8;box-sizing:border-box;background:#f2f2f2"></div>
<svg style="left:1479.5px;top:674.5px" width="9" height="5"><path d="M0 0H9L4.5 5Z" fill="#000"/></svg>
<div style="left:1497px;top:667px;width:1px;height:19px;background:#c8c8c8"></div>
<div class="t" style="left:1500.80px;top:671.49px;font-size:13.6px;line-height:13.6px;transform:scaleX(0.9793);">Weight</div>
<div style="left:1566px;top:669px;width:18px;height:16px;border:1px solid #c8c8c8;box-sizing:border-box;background:#f2f2f2"></div>
<svg style="left:1570.5px;top:674.5px" width="9" height="5"><path d="M0 0H9L4.5 5Z" fill="#000"/></svg>
<div style="left:1588px;top:667px;width:1px;height:19px;background:#c8c8c8"></div>
<div class="t" style="left:1592.00px;top:671.49px;font-size:13.6px;line-height:13.6px;transform:scaleX(0.9717);">Volume</div>
<div style="left:1656px;top:669px;width:18px;height:16px;border:1px solid #c8c8c8;box-sizing:border-box;background:#f2f2f2"></div>
<svg style="left:1660.5px;top:674.5px" width="9" height="5"><path d="M0 0H9L4.5 5Z" fill="#000"/></svg>
<div style="left:1678px;top:667px;width:1px;height:19px;background:#c8c8c8"></div>
<div class="t" style="left:1681.60px;top:671.49px;font-size:13.6px;line-height:13.6px;transform:scaleX(0.9660);">Default Whse</div>
<div style="left:1785px;top:669px;width:18px;height:16px;border:1px solid #c8c8c8;box-sizing:border-box;background:#f2f2f2"></div>
<svg style="left:1789.5px;top:674.5px" width="9" height="5"><path d="M0 0H9L4.5 5Z" fill="#000"/></svg>
<div style="left:1807px;top:667px;width:1px;height:19px;background:#c8c8c8"></div>
<div class="t" style="left:1810.50px;top:671.49px;font-size:13.6px;line-height:13.6px;transform:scaleX(0.9830);">Inventory Cycle</div>
<div style="left:289px;top:688px;width:1611px;height:23px;background:#f0f0f0"></div>
<div style="left:289px;top:688px;width:20px;height:23px;background:#f5f5f5;border-right:1px solid #c8c8c8;box-sizing:border-box"></div>
<svg style="left:295px;top:693px" width="9" height="13"><path d="M1.5 1.5L7.5 6.5L1.5 11.5Z" fill="none" stroke="#444" stroke-width="1.1"/><path d="M1 4.5L4.5 6.5L1 8.5Z" fill="#000"/><circle cx="1.7" cy="1.7" r="1.1" fill="#000"/><circle cx="1.7" cy="11.3" r="1.1" fill="#000"/><circle cx="7.3" cy="6.5" r="1.1" fill="#000"/></svg>
<div class="t" style="left:316.00px;top:694.49px;font-size:13.6px;line-height:13.6px;transform:scaleX(0.9018);">WORKSTATION FURN &amp; ACCESS</div>
<div class="t" style="left:542.00px;top:694.49px;font-size:13.6px;line-height:13.6px;transform:scaleX(0.9456);">Finished Good</div>
<div class="t" style="left:671.30px;top:694.49px;font-size:13.6px;line-height:13.6px;transform:scaleX(0.9147);">FIFO</div>
<div class="t" style="left:773.80px;top:694.49px;font-size:13.6px;line-height:13.6px;transform:scaleX(0.8822);">STD</div>
<div class="t" style="left:885.30px;top:694.49px;font-size:13.6px;line-height:13.6px;transform:scaleX(0.9411);">Buy</div>
<div class="t" style="left:1011.80px;top:694.49px;font-size:13.6px;line-height:13.6px;transform:scaleX(0.9675);">01</div>
<div class="t" style="left:1174.30px;top:694.49px;font-size:13.6px;line-height:13.6px;transform:scaleX(0.8785);">CONT</div>
<div class="t" style="left:1313.00px;top:694.49px;font-size:13.6px;line-height:13.6px;transform:scaleX(0.9660);">Container Corporation Of Usa</div>
<div class="t" style="left:1499.50px;top:694.49px;font-size:13.6px;line-height:13.6px;transform:scaleX(0.9675);">35</div>
<div class="t" style="left:1680.00px;top:694.49px;font-size:13.6px;line-height:13.6px;transform:scaleX(0.9675);">000</div>
<div class="t" style="left:1808.70px;top:694.49px;font-size:13.6px;line-height:13.6px;transform:scaleX(0.8709);">B</div>
<div class="t" style="left:1664.68px;top:694.49px;font-size:13.6px;line-height:13.6px;transform:scaleX(0.9675);">0</div>
<div style="left:289px;top:711px;width:1611px;height:56px;background:#fff"></div>
<div style="left:1888px;top:105px;width:3px;height:525px;background:#fff"></div>
<div style="left:698px;top:348px;width:519px;height:252px;background:#f0f0f0;border:1px solid #666;border-right-color:#bbb;border-bottom-color:#999;box-sizing:border-box;box-shadow:2px 5px 14px rgba(0,0,0,0.33)"></div>
<div style="left:699px;top:349px;width:517px;height:32px;background:#fff"></div>
<div class="t" style="left:703.50px;top:357.75px;font-size:14.6px;line-height:14.6px;transform:scaleX(0.9935);color:#000">Custom Filter</div>
<div class="t" style="left:1125.50px;top:357.16px;font-size:14px;line-height:14px;color:#222">?</div>
<svg style="position:absolute;left:1179px;top:358px" width="14" height="14"><path d="M1 1L13 13M13 1L1 13" stroke="#000" stroke-width="1.2"/></svg>
<div class="t" style="left:708.50px;top:392.49px;font-size:14.2px;line-height:14.2px;transform:scaleX(0.9227);color:#000">Show Rows Where:</div>
<div class="t" style="left:708.50px;top:416.49px;font-size:14.2px;line-height:14.2px;transform:scaleX(0.9430);color:#000">Item Code</div>
<div style="left:776px;top:423px;width:429px;height:1px;background:#c8c8c8"></div>
<div style="left:776px;top:424px;width:429px;height:1px;background:#fff"></div>
<div style="left:710px;top:440px;width:239px;height:24px;background:#fff;border:1px solid #0078d7;box-sizing:border-box"></div>
<div style="left:712.5px;top:442.5px;width:213px;height:19px;background:#0078d7;outline:1px dotted #000"></div>
<div class="t" style="left:713.00px;top:445.49px;font-size:14.2px;line-height:14.2px;transform:scaleX(0.9092);color:#fff">equals</div>
<svg style="left:932px;top:450px" width="9" height="5"><path d="M0 0H9L4.5 5Z" fill="#000"/></svg>
<div style="left:961px;top:440px;width:239px;height:24px;background:#fff;border:1px solid #adadad;box-sizing:border-box"></div>
<div style="left:1178px;top:442px;width:20px;height:20px;background:#f0f0f0"></div>
<svg style="left:1183px;top:450px" width="9" height="5"><path d="M0 0H9L4.5 5Z" fill="#000"/></svg>
<div style="left:770px;top:476px;width:15px;height:15px;border:1px solid #333;border-radius:50%;box-sizing:border-box;background:#fff"></div>
<div style="left:775px;top:481px;width:5px;height:5px;border-radius:50%;background:#000"></div>
<div class="t" style="left:791.50px;top:477.49px;font-size:14.2px;line-height:14.2px;transform:scaleX(0.8715);color:#000">AND</div>
<div style="left:850px;top:476px;width:15px;height:15px;border:1px solid #333;border-radius:50%;box-sizing:border-box;background:#fff"></div>
<div class="t" style="left:871.00px;top:477.49px;font-size:14.2px;line-height:14.2px;transform:scaleX(0.8312);color:#000">OR</div>
<div style="left:710px;top:502px;width:239px;height:24px;background:#fff;border:1px solid #adadad;box-sizing:border-box"></div>
<div style="left:927px;top:504px;width:20px;height:20px;background:#f0f0f0"></div>
<svg style="left:932px;top:512px" width="9" height="5"><path d="M0 0H9L4.5 5Z" fill="#000"/></svg>
<div style="left:961px;top:502px;width:239px;height:24px;background:#fff;border:1px solid #adadad;box-sizing:border-box"></div>
<div style="left:1178px;top:504px;width:20px;height:20px;background:#f0f0f0"></div>
<svg style="left:1183px;top:512px" width="9" height="5"><path d="M0 0H9L4.5 5Z" fill="#000"/></svg>
<div style="left:1016px;top:563px;width:91px;height:25px;background:#e1e1e1;border:2px solid #0078d7;box-sizing:border-box"></div>
<div class="t" style="left:1052.30px;top:568.66px;font-size:13.4px;line-height:13.4px;transform:scaleX(0.8991);color:#000">OK</div>
<div style="left:1113px;top:563px;width:91px;height:25px;background:#e1e1e1;border:1px solid #adadad;box-sizing:border-box"></div>
<div class="t" style="left:1139.08px;top:568.66px;font-size:13.4px;line-height:13.4px;transform:scaleX(0.9315);color:#000">Cancel</div>
<div style="left:691px;top:343px;width:519px;height:255px;border:5px solid #22b14c;box-sizing:border-box"></div>
<div style="left:0px;top:766px;width:1900px;height:10px;background:#fff"></div>
<div style="left:1896px;top:0px;width:4px;height:776px;background:#f0f0f0"></div>
<div style="left:1896px;top:0px;width:1px;height:776px;background:#fff"></div>
<svg style="left:1896px;top:112px" width="4" height="8"><path d="M0.5 7.5Q1.5 2 4 1.5" fill="none" stroke="#555" stroke-width="1.3"/></svg>
<svg style="left:1896px;top:617px" width="4" height="7"><path d="M0.5 0.5Q1.5 5 4 5.5" fill="none" stroke="#555" stroke-width="1.3"/></svg>
<div style="left:1896px;top:7px;width:4px;height:1px;background:#b0b0b0"></div>
<svg style="left:1895px;top:17px" width="5" height="10"><path d="M5 0.5L1 5L5 9.5" fill="none" stroke="#000" stroke-width="1.3"/></svg>
<div style="left:3px;top:5px;width:1893px;height:767px;border:5px solid #22b14c;box-sizing:border-box"></div>
</body></html>
